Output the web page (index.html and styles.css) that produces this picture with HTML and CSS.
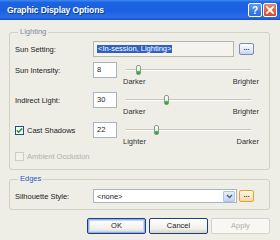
FILE: index.html
```html
<!DOCTYPE html>
<html>
<head>
<meta charset="utf-8">
<link rel="stylesheet" href="styles.css">
</head>
<body>
<div class="window">
  <div class="titlebar">
    <span class="title">Graphic Display Options</span>
    <div class="tb-buttons">
      <span class="tb-btn tb-help">?</span>
      <span class="tb-btn tb-close"><svg width="8" height="8" viewBox="0 0 8 8"><path d="M1 1L7 7M7 1L1 7" stroke="#fff" stroke-width="1.8" stroke-linecap="square"/></svg></span>
    </div>
  </div>
  <div class="client">
    <fieldset class="group">
      <legend class="legend legend-gray">Lighting</legend>
      <div class="row row-setting">
        <span class="lbl">Sun Setting:</span>
        <div class="field field-wide"><span class="sel">&lt;In-session, Lighting&gt;</span></div>
        <span class="dots">...</span>
      </div>
      <div class="slider-row">
        <span class="lbl">Sun Intensity:</span>
        <div class="field field-num">8</div>
        <div class="track"><span class="thumb" style="left:10px"></span></div>
        <div class="scale"><span>Darker</span><span>Brighter</span></div>
      </div>
      <div class="slider-row">
        <span class="lbl">Indirect Light:</span>
        <div class="field field-num">30</div>
        <div class="track"><span class="thumb" style="left:38px"></span></div>
        <div class="scale"><span>Darker</span><span>Brighter</span></div>
      </div>
      <div class="slider-row">
        <span class="lbl lbl-check"><span class="check"><svg width="7" height="7" viewBox="0 0 7 7"><path d="M0.8 3.4L2.6 5.2L6.2 1.4" fill="none" stroke="#21a121" stroke-width="1.6"/></svg></span>Cast Shadows</span>
        <div class="field field-num">22</div>
        <div class="track"><span class="thumb" style="left:28px"></span></div>
        <div class="scale"><span>Lighter</span><span>Darker</span></div>
      </div>
      <div class="row row-ambient">
        <span class="lbl lbl-check lbl-disabled"><span class="check check-disabled"></span>Ambient Occlusion</span>
      </div>
    </fieldset>
    <fieldset class="group group-edges">
      <legend class="legend legend-blue">Edges</legend>
      <div class="row row-edges">
        <span class="lbl">Silhouette Style:</span>
        <div class="combo"><span class="combo-text">&lt;none&gt;</span><span class="combo-btn"><svg width="7" height="5" viewBox="0 0 7 5"><path d="M1 1L3.5 3.5L6 1" fill="none" stroke="#4d6185" stroke-width="1.4"/></svg></span></div>
        <span class="dots dots-hot">...</span>
      </div>
    </fieldset>
    <div class="buttons">
      <span class="btn btn-default">OK</span>
      <span class="btn">Cancel</span>
      <span class="btn btn-disabled">Apply</span>
    </div>
  </div>
</div>
</body>
</html>
```

FILE: styles.css
```css
* { box-sizing: border-box; }
html, body { margin: 0; padding: 0; }
body {
  width: 280px;
  height: 240px;
  overflow: hidden;
  background: #eeede6;
  font-family: "Liberation Sans", Arial, sans-serif;
  font-size: 7.5px;
  color: #222;
}
.window { width: 280px; height: 240px; background: #eeede6; }
.titlebar {
  height: 20px;
  display: flex;
  align-items: center;
  justify-content: space-between;
  padding: 0 3px 0 7px;
  background: linear-gradient(to bottom, #3a8cf5 0%, #1e64e0 12%, #1a5fe0 50%, #2a6ee8 85%, #1550cc 100%);
}
.title {
  color: #fff;
  font-weight: bold;
  font-size: 8.5px;
  letter-spacing: -0.1px;
  text-shadow: 1px 1px 0 #0b3a9a;
}
.tb-buttons { display: flex; gap: 1px; }
.tb-btn {
  width: 14px;
  height: 14px;
  border: 1px solid #fff;
  border-radius: 2px;
  display: flex;
  align-items: center;
  justify-content: center;
  color: #fff;
  font-weight: bold;
  font-size: 10px;
}
.tb-help { background: linear-gradient(to bottom, #5d9af4, #2c6be0); }
.tb-close { background: linear-gradient(to bottom, #ec8766, #d8472a); }

.client { padding: 8px 10px 0 9px; }
.group {
  margin: 0;
  padding: 5px 5px 9px 5px;
  border: 1px solid #d3d1c3;
  border-radius: 3px;
  min-width: 0;
}
.group-edges { margin-top: 5px; padding: 6px 5px 6px 5px; }
.legend {
  padding: 0 2px;
  margin-left: 3px;
  line-height: 8px;
  font-size: 7.5px;
}
.legend-gray { color: #7e8a98; }
.legend-blue { color: #2a5ac8; }

.row { display: flex; align-items: center; }
.lbl { width: 78px; flex: none; white-space: nowrap; }
.row-setting { height: 16px; margin-bottom: 5px; }
.field {
  height: 16px;
  border: 1px solid #a9b4c2;
  background: #fff;
  padding: 2px 3px;
  line-height: 10px;
}
.field-wide { width: 141px; background: #f4f3ee; border-color: #b7b7b0; }
.sel { background: #2f62c4; color: #fff; padding: 0 1px; display: inline-block; line-height: 8px; }
.field-num { width: 24px; }
.dots {
  width: 15px;
  height: 12px;
  margin-left: 5px;
  border: 1px solid #7590b8;
  border-radius: 2px;
  background: linear-gradient(to bottom, #ffffff, #dce6f4 70%, #c4d3ea);
  color: #203c80;
  font-size: 7px;
  line-height: 7px;
  text-align: center;
  font-weight: bold;
}
.dots-hot { margin-left: 2px; border-color: #e3a23c; background: linear-gradient(to bottom, #fff7e6, #f6d9a0); }

.slider-row {
  display: grid;
  grid-template-columns: 78px 24px 142px;
  grid-template-rows: 16px 8px;
  column-gap: 0;
  margin-bottom: 6px;
  align-items: center;
}
.slider-row .lbl { grid-row: 1; grid-column: 1; }
.slider-row .field { grid-row: 1; grid-column: 2; }
.track {
  grid-row: 1;
  grid-column: 3;
  position: relative;
  height: 2px;
  margin: 0 8px 0 9px;
  border-top: 1px solid #c9c7bd;
  border-bottom: 1px solid #fff;
}
.thumb {
  position: absolute;
  top: -5px;
  width: 5px;
  height: 10px;
  border: 1px solid #8e9a8e;
  border-radius: 2px;
  background: linear-gradient(to bottom, #ffffff 0%, #e8ece6 55%, #3cbf3c 70%, #22a022 100%);
}
.scale {
  grid-row: 2;
  grid-column: 3;
  display: flex;
  justify-content: space-between;
  padding-left: 6px;
  line-height: 8px;
  color: #333;
}
.row-ambient { height: 8px; }
.lbl-check { display: flex; align-items: center; }
.check {
  width: 9px;
  height: 9px;
  border: 1px solid #1c5180;
  background: #fff;
  margin-right: 3px;
  display: flex;
  align-items: center;
  justify-content: center;
}
.check-disabled { border-color: #cfcdc2; background: #f2f1ea; }
.lbl-disabled { color: #b3b1a6; }

.row-edges { height: 14px; }
.combo {
  width: 144px;
  height: 14px;
  border: 1px solid #a9b4c2;
  background: #fff;
  display: flex;
  align-items: center;
  justify-content: space-between;
  padding: 0 1px 0 3px;
}
.combo-btn {
  width: 12px;
  height: 11px;
  border: 1px solid #b4c3de;
  border-radius: 1px;
  background: linear-gradient(to bottom, #e6eefc, #c2d3f2);
  display: flex;
  align-items: center;
  justify-content: center;
}
.row-edges .dots { height: 12px; }

.buttons {
  display: flex;
  justify-content: flex-end;
  gap: 3px;
  margin-top: 8px;
}
.btn {
  width: 59px;
  height: 16px;
  border: 1px solid #1e3f7a;
  border-radius: 2px;
  background: linear-gradient(to bottom, #ffffff, #f1f0ea 70%, #d6d3c8);
  text-align: center;
  line-height: 14px;
  color: #222;
}
.btn-default { box-shadow: inset 0 0 0 1px #8fb0ea, inset 0 0 0 2px #c5d6f5; border-color: #1e3f7a; }
.btn-disabled { border-color: #d6d4ca; background: #f8f7f3; color: #b3b1a6; }
```
